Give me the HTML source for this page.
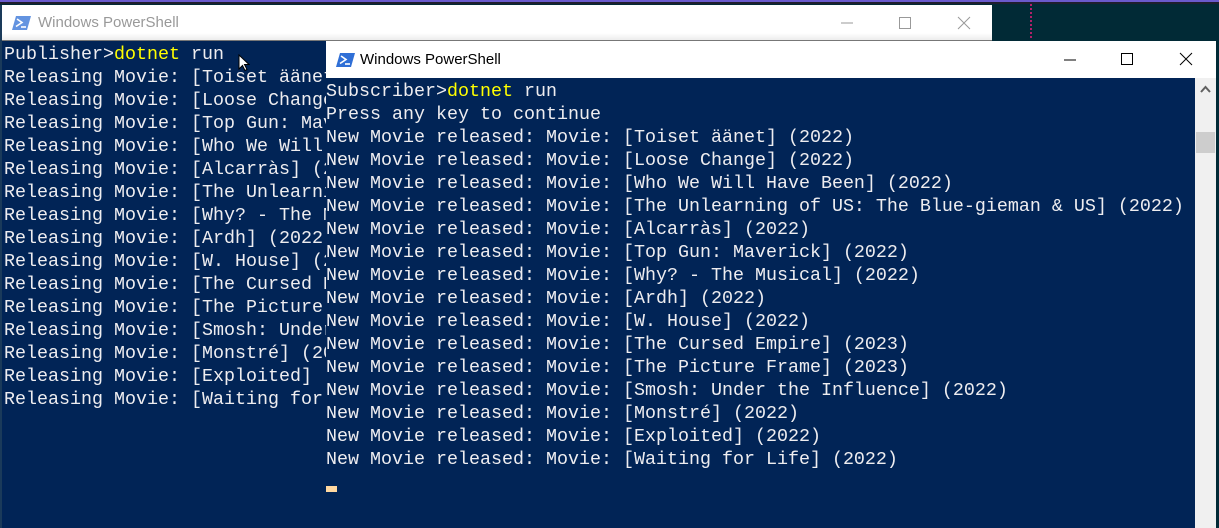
<!DOCTYPE html>
<html><head><meta charset="utf-8"><style>
*{margin:0;padding:0;box-sizing:border-box}
body{width:1219px;height:528px;overflow:hidden;background:#012a36;position:relative;font-family:"Liberation Sans",sans-serif}
.topbar{position:absolute;left:0;top:0;width:1219px;height:4px;background:#1e1e2e;border-top:2px solid #6a5acd}
.dots{position:absolute;left:1030px;top:4px;height:34px;border-left:2px dotted #b0206a}
.win{position:absolute;background:#012456;overflow:hidden}
.title{position:absolute;left:0;top:0;right:0;background:#fff;font-size:15px}
.title .t{position:absolute;left:38px;top:10px}
.ico{position:absolute;left:12px;top:11px}
pre{position:absolute;font-family:"Liberation Mono",monospace;font-size:18.33px;line-height:23px;color:#eeedf0;white-space:pre}
.y{color:#ffff00}
</style></head><body>
<div class="topbar"></div>
<div class="dots"></div>
<div class="win" style="left:0;top:5px;width:992px;height:523px;border-left:2px solid #1a3a5a">
 <div class="title" style="height:36px;background:linear-gradient(#fff 80%,#ececec);border-bottom:1px solid #777">
  <svg class="ico" width="20" height="16" viewBox="0 0 20 16" style="left:10px;top:10px;opacity:.75"><path d="M4 1h15l-4 14H0z" fill="#2f6fd6"/><path d="M5 4l5 3.5-6 4" stroke="#fff" stroke-width="1.6" fill="none"/><path d="M9 12h5" stroke="#fff" stroke-width="1.6"/></svg>
  <span class="t" style="color:#999;left:36px;top:9px">Windows PowerShell</span>
  <svg style="position:absolute;left:838px;top:16px" width="14" height="4"><path d="M1 2h12" stroke="#999"/></svg>
  <svg style="position:absolute;left:896px;top:11px" width="14" height="14"><rect x="1.5" y="1.5" width="11" height="11" fill="none" stroke="#999"/></svg>
  <svg style="position:absolute;left:955px;top:11px" width="14" height="14"><path d="M1 1l12 12M13 1L1 13" stroke="#999"/></svg>
 </div>
 <pre style="left:2px;top:38px">Publisher&gt;<span class="y">dotnet</span> run
Releasing Movie: [Toiset äänet
Releasing Movie: [Loose Change
Releasing Movie: [Top Gun: Mav
Releasing Movie: [Who We Will 
Releasing Movie: [Alcarràs] (2
Releasing Movie: [The Unlearni
Releasing Movie: [Why? - The M
Releasing Movie: [Ardh] (2022)
Releasing Movie: [W. House] (2
Releasing Movie: [The Cursed E
Releasing Movie: [The Picture 
Releasing Movie: [Smosh: Under
Releasing Movie: [Monstré] (20
Releasing Movie: [Exploited] (
Releasing Movie: [Waiting for </pre>
 <svg style="position:absolute;left:236px;top:49px" width="12" height="18"><path d="M1 1v14l3.5-3.5 2.5 5 2-1-2.5-5H11z" fill="#fff" stroke="#000" stroke-width="1"/></svg>
</div>
<div class="win" style="left:326px;top:41px;width:890px;height:487px">
 <div class="title" style="height:37px">
  <svg class="ico" width="20" height="16" viewBox="0 0 20 16" style="left:10px;top:11px"><path d="M4 1h15l-4 14H0z" fill="#2f6fd6"/><path d="M5 4l5 3.5-6 4" stroke="#fff" stroke-width="1.6" fill="none"/><path d="M9 12h5" stroke="#fff" stroke-width="1.6"/></svg>
  <span class="t" style="color:#000;left:34px;top:10px">Windows PowerShell</span>
  <svg style="position:absolute;left:737px;top:17px" width="14" height="4"><path d="M1 2h12" stroke="#000"/></svg>
  <svg style="position:absolute;left:794px;top:11px" width="14" height="14"><rect x="1.5" y="1.5" width="11" height="11" fill="none" stroke="#000"/></svg>
  <svg style="position:absolute;left:853px;top:11px" width="14" height="14"><path d="M1 1l12 12M13 1L1 13" stroke="#000"/></svg>
 </div>
 <pre style="left:0;top:39px">Subscriber&gt;<span class="y">dotnet</span> run
Press any key to continue
New Movie released: Movie: [Toiset äänet] (2022)
New Movie released: Movie: [Loose Change] (2022)
New Movie released: Movie: [Who We Will Have Been] (2022)
New Movie released: Movie: [The Unlearning of US: The Blue-gieman &amp; US] (2022)
New Movie released: Movie: [Alcarràs] (2022)
New Movie released: Movie: [Top Gun: Maverick] (2022)
New Movie released: Movie: [Why? - The Musical] (2022)
New Movie released: Movie: [Ardh] (2022)
New Movie released: Movie: [W. House] (2022)
New Movie released: Movie: [The Cursed Empire] (2023)
New Movie released: Movie: [The Picture Frame] (2023)
New Movie released: Movie: [Smosh: Under the Influence] (2022)
New Movie released: Movie: [Monstré] (2022)
New Movie released: Movie: [Exploited] (2022)
New Movie released: Movie: [Waiting for Life] (2022)</pre>
 <div style="position:absolute;left:0;top:445px;width:11px;height:6px;background:#ffd8a0"></div>
 <div style="position:absolute;left:869px;top:37px;width:21px;height:450px;background:#f0f0f0">
  <svg style="position:absolute;left:5px;top:7px" width="11" height="8"><path d="M1 7l4.5-5 4.5 5" stroke="#606060" stroke-width="2" fill="none"/></svg>
  <div style="position:absolute;left:1px;top:54px;width:19px;height:21px;background:#cdcdcd"></div>
 </div>
</div>
</body></html>
